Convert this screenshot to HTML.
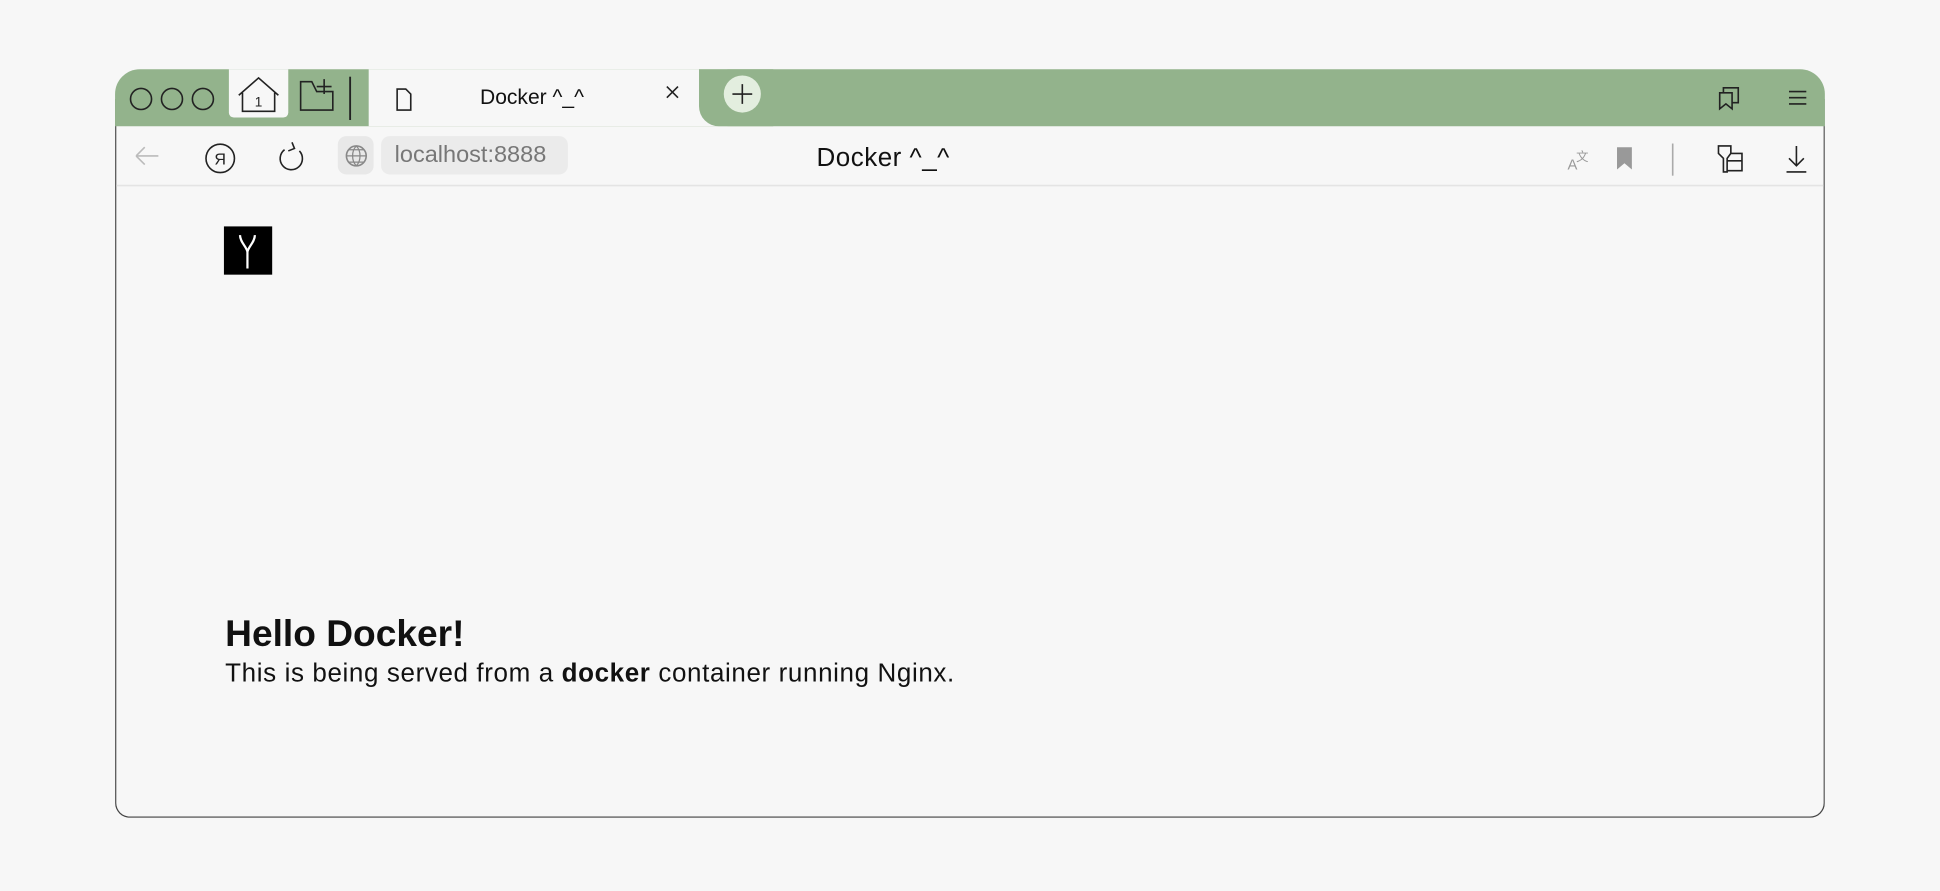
<!DOCTYPE html>
<html><head><meta charset="utf-8"><style>
html,body{margin:0;padding:0;background:#f7f7f7;width:1940px;height:890px;overflow:hidden;font-family:"Liberation Sans",sans-serif;}
#s{position:absolute;left:0;top:0;width:1568px;height:720px;transform:scale(1.2372);transform-origin:0 0;}
.a{position:absolute;}
svg{position:absolute;overflow:visible}
</style></head><body><div id="s">
<div class="a" style="left:93px;top:80px;width:1380px;height:580px;border:1px solid #444;border-top:none;border-radius:0 0 12px 12px;background:#f7f7f7"></div>
<div class="a" style="left:93px;top:56px;width:1382px;height:46px;background:#93b38c;border-radius:20px 20px 0 0"></div>
<div class="a" style="left:298px;top:56px;width:290px;height:46px;background:#f7f7f7"></div>
<div class="a" style="left:565px;top:56px;width:60px;height:46px;background:#93b38c;border-radius:0 0 0 16px"></div>
<div class="a" style="left:185px;top:56px;width:48px;height:39px;background:#f7f7f7;border-radius:0 0 4px 4px"></div>
<svg width="1568" height="720" style="left:0;top:0" fill="none" stroke="#222" stroke-width="1.3">
<circle cx="114" cy="80" r="8.5"/><circle cx="139" cy="80" r="8.5"/><circle cx="164" cy="80" r="8.5"/>
<path d="M193 77 L209 63 L225 77 M196 75 V90 H222 V75"/>
<text x="209" y="86" font-size="11" fill="#222" stroke="none" text-anchor="middle" font-family="Liberation Sans">1</text>
<path d="M243 66 V89 H269 V74 H256 L252 66 Z M262 64 V76 M256 70 H268"/>
<line x1="283" y1="62" x2="283" y2="97" stroke-width="1.5"/>
<path d="M321 72 H328 L332 76 V89 H321 Z"/>
<path d="M539 70 L548 79 M548 70 L539 79"/>
<circle cx="600" cy="76" r="15" fill="#e3eedf" stroke="none"/>
<path d="M600 68 V84 M592 76 H608"/>
<path d="M1390 75 V88 L1395 84 L1400 88 V75 Z M1393 75 V71 H1405 V83 H1400"/>
<path d="M1446 74 H1460 M1446 79 H1460 M1446 84 H1460"/>
<path d="M110 126 H128 M110 126 L117 119 M110 126 L117 133" stroke="#bbb"/>
<circle cx="178" cy="128" r="11.5"/>
<text x="178" y="133" font-size="13" fill="#222" stroke="none" text-anchor="middle">Я</text>
<path d="M242 122 A9 9 0 1 1 230 121 M236 115 L238 120 L233 122"/>
<rect x="273" y="110" width="29" height="31" rx="7" fill="#e8e8e8" stroke="none"/>
<circle cx="288" cy="126" r="8" stroke="#888"/><path d="M280 126 H296 M288 118 C284 122 284 130 288 134 M288 118 C292 122 292 130 288 134 M282 121 H294 M282 131 H294" stroke="#888" stroke-width="1"/>
<rect x="308" y="110" width="151" height="31" rx="7" fill="#ebebeb" stroke="none"/>
<line x1="94" y1="150" x2="1474" y2="150" stroke="#e4e4e4"/>
<text x="1267" y="137" font-size="12" fill="#999" stroke="none">A</text><text x="1274" y="130" font-size="10" fill="#999" stroke="none">文</text>
<path d="M1307 119 H1319 V137 L1313 132 L1307 137 Z" fill="#999" stroke="none"/>
<line x1="1352" y1="116" x2="1352" y2="142" stroke="#aaa"/>
<path d="M1389 118 H1399 V124 L1396 128 V139 H1393 V128 L1389 124 Z M1399 124 H1408 V138 H1396 M1396 130 H1408"/>
<path d="M1452 118 V134 M1446 128 L1452 134 L1458 128 M1444 139 H1460"/>
<rect x="181" y="183" width="39" height="39" fill="#000" stroke="none"/>
<path d="M194 190 C194 196 200 200 200 204 V217 M206 190 C206 196 200 200 200 204" stroke="#fff" stroke-width="1.8"/>
</svg>
<div class="a" style="left:388px;top:69px;font-size:17px;color:#111">Docker ^_^</div>
<div class="a" style="left:319px;top:115px;font-size:19px;color:#777">localhost:8888</div>
<div class="a" style="left:660px;top:116px;font-size:21px;color:#111;letter-spacing:0.4px">Docker ^_^</div>
<div class="a" style="left:182px;top:496px;font-size:30px;font-weight:bold;color:#111">Hello Docker!</div>
<div class="a" style="left:182px;top:533px;font-size:21px;color:#111;letter-spacing:0.5px">This is being served from a <b>docker</b> container running Nginx.</div>
</div></body></html>
